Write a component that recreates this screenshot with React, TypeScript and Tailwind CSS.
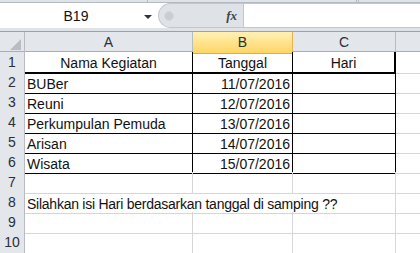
import React from "react";

const font = { fontFamily: "'Liberation Sans', Arial, sans-serif" };

type Cell = { text?: string; align?: "l" | "c" | "r"; r?: string; b?: string; spill?: boolean };

const rows: Cell[][] = [
  [
    { text: "Nama Kegiatan", align: "c", r: "border-r border-r-black", b: "border-b-2 border-b-black" },
    { text: "Tanggal", align: "c", r: "border-r border-r-black", b: "border-b-2 border-b-black" },
    { text: "Hari", align: "c", r: "border-r-2 border-r-black", b: "border-b-2 border-b-black" },
  ],
  [
    { text: "BUBer", r: "border-r border-r-black", b: "border-b border-b-black" },
    { text: "11/07/2016", align: "r", r: "border-r border-r-black", b: "border-b border-b-black" },
    { r: "border-r border-r-black", b: "border-b border-b-black" },
  ],
  [
    { text: "Reuni", r: "border-r border-r-black", b: "border-b border-b-black" },
    { text: "12/07/2016", align: "r", r: "border-r border-r-black", b: "border-b border-b-black" },
    { r: "border-r border-r-black", b: "border-b border-b-black" },
  ],
  [
    { text: "Perkumpulan Pemuda", r: "border-r border-r-black", b: "border-b border-b-black" },
    { text: "13/07/2016", align: "r", r: "border-r border-r-black", b: "border-b border-b-black" },
    { r: "border-r border-r-black", b: "border-b border-b-black" },
  ],
  [
    { text: "Arisan", r: "border-r border-r-black", b: "border-b border-b-black" },
    { text: "14/07/2016", align: "r", r: "border-r border-r-black", b: "border-b border-b-black" },
    { r: "border-r border-r-black", b: "border-b border-b-black" },
  ],
  [
    { text: "Wisata", r: "border-r border-r-black", b: "border-b border-b-black" },
    { text: "15/07/2016", align: "r", r: "border-r border-r-black", b: "border-b border-b-black" },
    { r: "border-r border-r-black", b: "border-b border-b-black" },
  ],
  [{}, {}, {}],
  [
    { text: "Silahkan isi Hari berdasarkan tanggal di samping ??", spill: true, r: "border-r border-r-transparent" },
    { r: "border-r border-r-transparent" },
    {},
  ],
  [{}, {}, {}],
  [{}, {}, {}],
];

export default function App() {
  return (
    <div className="w-[420px] h-[253px] overflow-hidden bg-white text-[#111]" style={font}>
      {/* top strip */}
      <div className="h-[3px] bg-[#dfe3e8] border-b border-[#b4bac2] flex">
        <div className="w-[148px] border-r border-[#b4bac2]" />
        <div className="w-[209px] border-r border-[#b4bac2]" />
        <div className="w-[2px] border-r border-[#b4bac2]" />
      </div>
      {/* formula bar */}
      <div className="h-[25px] flex bg-white">
        <div className="w-[158px] flex items-center relative">
          <div className="flex-1 text-center text-[14px] pl-[8px] pt-[1px]">B19</div>
          <div className="w-0 h-0 border-l-[4px] border-r-[4px] border-t-[4px] border-l-transparent border-r-transparent border-t-[#333] mr-[6px] mt-[2px]" />
        </div>
        <div className="w-[85px] bg-[#dfe3e8] rounded-l-full border-l border-t border-b border-[#c2c7ce] flex items-center relative">
          <div className="w-[10px] h-[10px] rounded-full bg-[#c9ced4] ml-[5px] border border-[#d6dade]" />
          <div className="ml-auto mr-[6px] italic font-bold text-[13px] text-[#444]" style={{ fontFamily: "'Liberation Serif', serif" }}>
            fx
          </div>
        </div>
        <div className="flex-1 border-l border-[#c2c7ce] border-t border-b border-t-[#c2c7ce] border-b-[#c2c7ce]" />
      </div>
      {/* gray band */}
      <div className="h-[4px] bg-[#dfe3e8] border-b border-[#9aa1aa]" />
      {/* column headers */}
      <div className="h-[20px] grid grid-cols-[25px_168px_100px_103px_1fr] bg-[#e3e6ea] border-b border-[#a9aeb5] text-[14px] text-[#2a2f38]">
        <div className="border-r border-[#b8bcc2] relative">
          <div className="absolute right-[3px] bottom-[3px]" style={{ borderBottom: "11px solid #b9bdc3", borderLeft: "11px solid transparent", width: 0, height: 0 }} />
        </div>
        <div className="border-r border-[#b8bcc2] flex items-center justify-center">A</div>
        <div className="border-r border-[#f0b348] border-b border-b-[#f0a830] bg-gradient-to-b from-[#fff1b4] to-[#fdd562] flex items-center justify-center -mb-[1px]">B</div>
        <div className="border-r border-[#b8bcc2] flex items-center justify-center">C</div>
        <div />
      </div>
      {/* rows */}
      {rows.map((row, i) => (
        <div key={i} className="h-[20px] grid grid-cols-[25px_168px_100px_103px_1fr] text-[14px]">
          <div className="bg-[#e3e6ea] border-r border-r-[#b8bcc2] border-b border-b-[#c9cdd2] flex items-center justify-center text-[#2a2f38]">
            {i + 1}
          </div>
          {row.map((c, j) => (
            <div
              key={j}
              className={`${c.r ?? "border-r border-r-[#d6d6d6]"} ${c.b ?? "border-b border-b-[#d6d6d6]"} flex items-end leading-[18px] ${
                c.align === "c" ? "justify-center" : c.align === "r" ? "justify-end pr-[2px]" : "justify-start pl-[2px]"
              } ${c.spill ? "overflow-visible whitespace-nowrap relative z-10 tracking-[-0.25px]" : "overflow-hidden"}`}
            >
              {c.text}
            </div>
          ))}
          <div className="border-b border-b-[#d6d6d6]" />
        </div>
      ))}
    </div>
  );
}
